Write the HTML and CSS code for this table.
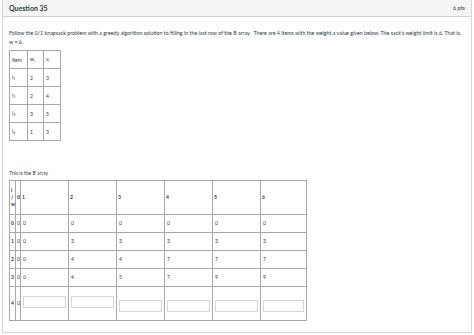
FILE: index.html
```html
<!DOCTYPE html>
<html>
<head>
<meta charset="utf-8">
<link rel="stylesheet" href="styles.css">
</head>
<body>
<div class="card">
  <div class="card-head">
    <span class="q-title">Question 35</span>
    <span class="q-pts">6 pts</span>
  </div>
  <div class="card-body">
    <p class="intro">Follow the 0/1 knapsack problem with a greedy algorithm solution to filling in the last row of the B array.&nbsp; There are 4 items with the weight a value given below. The sack's weight limit is 6. That is, w&nbsp;=&nbsp;6.</p>
    <table class="items">
      <tr><td>Item</td><td>w<sub>i</sub></td><td>v<sub>i</sub></td></tr>
      <tr><td>i<sub>1</sub></td><td>2</td><td>3</td></tr>
      <tr><td>i<sub>2</sub></td><td>2</td><td>4</td></tr>
      <tr><td>i<sub>3</sub></td><td>3</td><td>5</td></tr>
      <tr><td>i<sub>4</sub></td><td>1</td><td>3</td></tr>
    </table>
    <p class="caption">This is the B array</p>
    <table class="barray">
      <colgroup>
        <col class="c-lab"><col class="c-zero"><col class="c-w"><col class="c-w"><col class="c-w"><col class="c-w"><col class="c-w">
      </colgroup>
      <tr class="r-head"><th>i<br>/<br>w</th><th>0</th><th>1</th><th>2</th><th>3</th><th>4</th><th>5</th><th>6</th></tr>
      <tr><th>0</th><td>0</td><td>0</td><td>0</td><td>0</td><td>0</td><td>0</td><td>0</td></tr>
      <tr><th>1</th><td>0</td><td>0</td><td>3</td><td>3</td><td>3</td><td>3</td><td>3</td></tr>
      <tr><th>2</th><td>0</td><td>0</td><td>4</td><td>4</td><td>7</td><td>7</td><td>7</td></tr>
      <tr><th>3</th><td>0</td><td>0</td><td>4</td><td>5</td><td>7</td><td>9</td><td>9</td></tr>
      <tr class="r-input"><th>4</th><td>0</td>
        <td><span class="blank hi"></span></td>
        <td><span class="blank hi"></span></td>
        <td><span class="blank lo"></span></td>
        <td><span class="blank lo"></span></td>
        <td><span class="blank lo"></span></td>
        <td><span class="blank lo"></span></td>
      </tr>
    </table>
  </div>
</div>
</body>
</html>
```
FILE: styles.css
```css
html, body {
  margin: 0;
  padding: 0;
  background: #ffffff;
}
body {
  font-family: Lato, "Open Sans", sans-serif;
  color: #2d3b45;
}
.card {
  margin: -1px 2px 0 2px;
  width: 470px;
  height: 334px;
  border: 1px solid #d8d8d8;
  box-sizing: border-box;
  background: #fff;
}
.card-head {
  height: 17px;
  background: #f5f5f5;
  border-bottom: 1px solid #d0d0d0;
  display: flex;
  align-items: center;
  justify-content: space-between;
  padding: 0 6px 0 6px;
  box-sizing: border-box;
}
.q-title {
  font-weight: 700;
  font-size: 7px;
  color: #2d3b45;
}
.q-pts {
  font-size: 5.5px;
  color: #2d3b45;
}
.card-body {
  padding: 12px 2px 0 6px;
}
.intro {
  margin: 0;
  font-size: 5.3px;
  line-height: 9px;
  color: #2d3b45;
}
.items {
  border-collapse: collapse;
  margin-top: 3px;
  font-size: 5px;
  color: #2d3b45;
}
.items td {
  border: 1px solid #a8a8a8;
  height: 17px;
  padding: 0 2px;
  vertical-align: middle;
  text-align: left;
}
.items td:nth-child(1) { width: 13px; }
.items td:nth-child(2) { width: 11px; }
.items td:nth-child(3) { width: 12px; }
sub {
  font-size: 3.5px;
  vertical-align: -1px;
}
.caption {
  margin: 28px 0 0 0;
  font-size: 5px;
  line-height: 9px;
}
.barray {
  border-collapse: collapse;
  margin-top: 2px;
  font-size: 5px;
  color: #2d3b45;
  table-layout: fixed;
  width: 298px;
}
.barray .c-lab { width: 6px; }
.barray .c-zero { width: 5px; }
.barray .c-w { width: 48px; }
.barray th, .barray td {
  border: 1px solid #a8a8a8;
  padding: 0 1px;
  text-align: left;
  vertical-align: middle;
  height: 17px;
  line-height: 7px;
  overflow: hidden;
}
.barray td { padding-left: 2px; }
.barray td:nth-child(2) { padding-left: 1px; }
.barray th { font-weight: 700; }
.barray .r-head th { height: 33px; }
.barray .r-input th, .barray .r-input td { height: 33px; }
.blank {
  display: block;
  height: 12px;
  border: 1px solid #d4d4d4;
  box-sizing: border-box;
  margin-right: 1px;
}
.blank.hi { margin-top: -3px; }
.blank.lo { margin-top: 5px; }
```
